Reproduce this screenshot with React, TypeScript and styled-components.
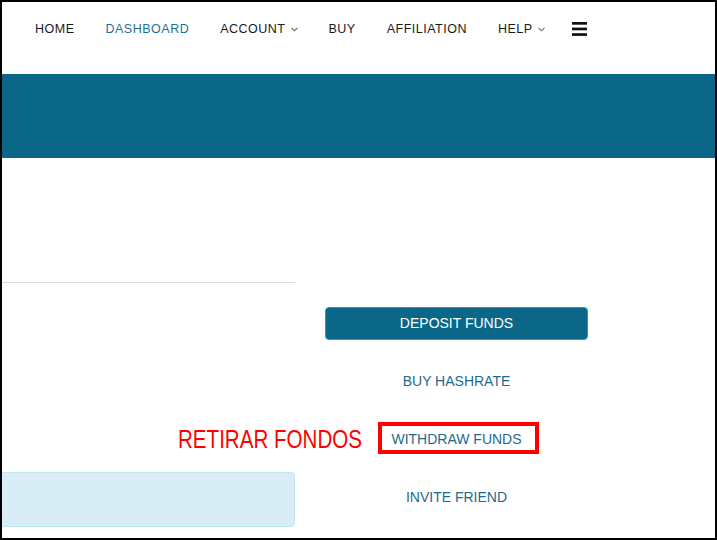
import React from 'react';
import styled, { createGlobalStyle } from 'styled-components';

const GlobalStyle = createGlobalStyle`
  html, body {
    margin: 0;
    padding: 0;
    background: #fff;
  }
  body {
    font-family: "Liberation Sans", Arial, sans-serif;
  }
`;

const brand = '#0a6788';
const linkColor = '#1d6b8b';

// Styles
const Frame = styled.div`
  position: relative;
  width: 717px;
  height: 540px;
  box-sizing: border-box;
  border: 2px solid #000;
  overflow: hidden;
  background: #fff;
`;

const Nav = styled.nav`
  display: flex;
  align-items: flex-start;
  gap: 31px;
  height: 72px;
  box-sizing: border-box;
  padding: 18px 0 0 33px;
`;

const NavItem = styled.a<{ $active?: boolean }>`
  display: flex;
  align-items: center;
  gap: 5px;
  height: 18px;
  font-size: 12.5px;
  letter-spacing: 0.5px;
  text-transform: uppercase;
  text-decoration: none;
  color: ${(p) => (p.$active ? '#1e6f93' : '#1a1a1a')};
  white-space: nowrap;
`;

const Burger = styled.span`
  display: flex;
  align-items: center;
  height: 18px;
  margin-left: -4px;
`;

const Banner = styled.div`
  height: 84px;
  background: ${brand};
`;

const Content = styled.div`
  display: flex;
  align-items: flex-start;
`;

const LeftColumn = styled.div`
  width: 293px;
  flex-shrink: 0;
  padding-top: 124px;
`;

const Rule = styled.div`
  height: 1px;
  background: #dcdcdc;
`;

const Alert = styled.div`
  margin: 189px 0 0 -20px;
  height: 55px;
  box-sizing: border-box;
  border: 1px solid #bfe6f2;
  border-radius: 4px;
  background: #d9edf7;
`;

const RightColumn = styled.div`
  width: 263px;
  margin-left: 30px;
  padding-top: 136px;
  display: flex;
  flex-direction: column;
`;

const ActionRow = styled.div`
  position: relative;
  height: 58px;
  display: flex;
  align-items: center;
  justify-content: center;
`;

const PrimaryButton = styled.button`
  width: 263px;
  height: 33px;
  border: 1px solid #1a9fd3;
  border-radius: 4px;
  background: ${brand};
  color: #fff;
  font-family: "Liberation Sans", Arial, sans-serif;
  font-size: 14px;
  text-transform: uppercase;
  cursor: pointer;
`;

const ActionLink = styled.a`
  font-size: 14px;
  color: ${linkColor};
  text-decoration: none;
  text-transform: uppercase;
`;

const Highlight = styled.span`
  position: absolute;
  left: 53px;
  top: 12px;
  width: 161px;
  height: 32px;
  box-sizing: border-box;
  border: 4px solid #ff0000;
  pointer-events: none;
`;

const Annotation = styled.span`
  position: absolute;
  left: -147px;
  top: 50%;
  transform: translateY(-50%) scaleX(0.823);
  transform-origin: left center;
  font-family: "Liberation Sans", Arial, sans-serif;
  font-size: 25px;
  color: #ff0000;
  white-space: nowrap;
`;

const Chevron = () => (
  <svg width="7" height="5" viewBox="0 0 7 5">
    <path d="M0.5 0.8 L3.5 3.8 L6.5 0.8" fill="none" stroke="#5b6b7b" strokeWidth="1.1" />
  </svg>
);

const Bars = () => (
  <svg width="15" height="14" viewBox="0 0 15 14">
    <rect x="0" y="0" width="15" height="2.7" fill="#111" />
    <rect x="0" y="5.6" width="15" height="2.7" fill="#111" />
    <rect x="0" y="11.2" width="15" height="2.7" fill="#111" />
  </svg>
);

const navItems = [
  { label: 'Home' },
  { label: 'Dashboard', active: true },
  { label: 'Account', menu: true },
  { label: 'Buy' },
  { label: 'Affiliation' },
  { label: 'Help', menu: true },
];

const App: React.FC = () => {
  return (
    <>
      <GlobalStyle />
      <Frame>
        <Nav>
          {navItems.map((item) => (
            <NavItem key={item.label} href="#" $active={item.active}>
              {item.label}
              {item.menu && <Chevron />}
            </NavItem>
          ))}
          <Burger>
            <Bars />
          </Burger>
        </Nav>

        <Banner />

        <Content>
          <LeftColumn>
            <Rule />
            <Alert />
          </LeftColumn>

          <RightColumn>
            <ActionRow>
              <PrimaryButton>Deposit funds</PrimaryButton>
            </ActionRow>
            <ActionRow>
              <ActionLink href="#">Buy hashrate</ActionLink>
            </ActionRow>
            <ActionRow>
              <Annotation>RETIRAR FONDOS</Annotation>
              <ActionLink href="#">Withdraw funds</ActionLink>
              <Highlight />
            </ActionRow>
            <ActionRow>
              <ActionLink href="#">Invite friend</ActionLink>
            </ActionRow>
          </RightColumn>
        </Content>
      </Frame>
    </>
  );
};

export default App;
